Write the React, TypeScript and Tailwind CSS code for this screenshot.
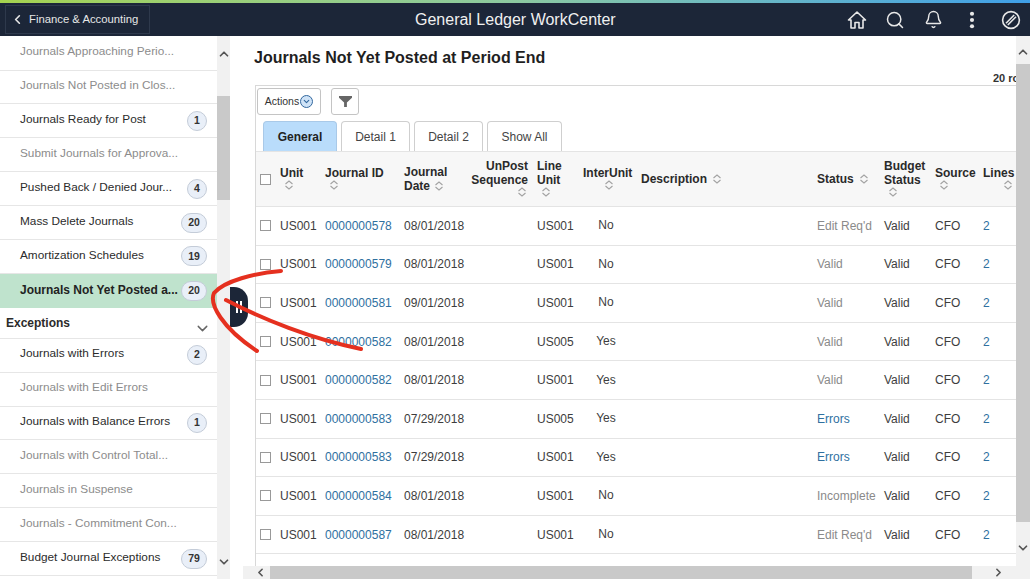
import { Bell, ChevronDown, ChevronLeft, ChevronRight, ChevronUp, Search } from "lucide-react";

type NavItem = { label: string; count?: number; muted?: boolean; active?: boolean };

const topItems: NavItem[] = [
  { label: "Journals Approaching Perio...", muted: true },
  { label: "Journals Not Posted in Clos...", muted: true },
  { label: "Journals Ready for Post", count: 1 },
  { label: "Submit Journals for Approva...", muted: true },
  { label: "Pushed Back / Denied Jour...", count: 4 },
  { label: "Mass Delete Journals", count: 20 },
  { label: "Amortization Schedules", count: 19 },
  { label: "Journals Not Yet Posted a...", count: 20, active: true },
];

const exceptionItems: NavItem[] = [
  { label: "Journals with Errors", count: 2 },
  { label: "Journals with Edit Errors", muted: true },
  { label: "Journals with Balance Errors", count: 1 },
  { label: "Journals with Control Total...", muted: true },
  { label: "Journals in Suspense", muted: true },
  { label: "Journals - Commitment Con...", muted: true },
  { label: "Budget Journal Exceptions", count: 79 },
];

const rows = [
  { unit: "US001", id: "0000000578", date: "08/01/2018", line: "US001", inter: "No", status: "Edit Req'd" },
  { unit: "US001", id: "0000000579", date: "08/01/2018", line: "US001", inter: "No", status: "Valid" },
  { unit: "US001", id: "0000000581", date: "09/01/2018", line: "US001", inter: "No", status: "Valid" },
  { unit: "US001", id: "0000000582", date: "08/01/2018", line: "US005", inter: "Yes", status: "Valid" },
  { unit: "US001", id: "0000000582", date: "08/01/2018", line: "US001", inter: "Yes", status: "Valid" },
  { unit: "US001", id: "0000000583", date: "07/29/2018", line: "US005", inter: "Yes", status: "Errors" },
  { unit: "US001", id: "0000000583", date: "07/29/2018", line: "US001", inter: "Yes", status: "Errors" },
  { unit: "US001", id: "0000000584", date: "08/01/2018", line: "US001", inter: "No", status: "Incomplete" },
  { unit: "US001", id: "0000000587", date: "08/01/2018", line: "US001", inter: "No", status: "Edit Req'd" },
];

const gridCols = "grid grid-cols-[24px_45px_79px_66px_67px_46px_58px_176px_67px_51px_48px_33px]";

function Sort({ className = "" }: { className?: string }) {
  return (
    <svg viewBox="0 0 10 10" className={`h-[10px] w-[10px] shrink-0 ${className}`} fill="none" stroke="#a3a3a3" strokeWidth="1.1">
      <path d="M1.5 4 5 1l3.5 3M1.5 6 5 9l3.5-3" />
    </svg>
  );
}

function Checkbox() {
  return <div className="h-[11px] w-[11px] border border-[#999] bg-white" />;
}

function NavRow({ item }: { item: NavItem }) {
  return (
    <div
      className={`flex h-[33.9px] items-center justify-between pl-5 pr-[10px] ${
        item.active ? "bg-[#bfe3cd] text-[12px] font-bold text-[#222]" : "border-b border-[#e6e6e6] text-[11.8px]"
      } ${item.muted ? "text-[#8c8c8c]" : "text-[#2b2b2b]"}`}
    >
      <span className="mb-[2px] whitespace-nowrap">{item.label}</span>
      {item.count !== undefined && (
        <span
          className={`flex h-[20px] items-center justify-center rounded-full border border-[#c4ccd8] bg-[#e9eff8] text-[10.5px] font-bold text-[#333] ${
            item.count > 9 ? "w-[26px]" : "w-[20px]"
          }`}
        >
          {item.count}
        </span>
      )}
    </div>
  );
}

function Annotation() {
  return (
    <svg className="pointer-events-none absolute left-0 top-0 h-[579px] w-[1030px]" viewBox="0 0 1030 579" fill="none" stroke="#e5301f" strokeWidth="4" strokeLinecap="round">
      <path d="M281 271C255 273 224 281 214 293C209 304 222 328 257 351" />
      <path d="M226 300C262 319 312 339 361 349" />
    </svg>
  );
}

export default function App() {
  return (
    <div className="flex h-[579px] w-[1030px] flex-col overflow-hidden bg-white font-['Liberation_Sans',Arial,sans-serif] text-[12px] text-[#3d3d3d]">
      <div className="h-[3px] shrink-0 bg-gradient-to-r from-[#a5d34f] via-[#8cc9a0] to-[#3f9fe8]" />
      <header className="relative flex h-[33px] shrink-0 items-center justify-between bg-[#1c2638] text-white">
        <div className="ml-[5px] flex h-[29px] w-[145px] items-center gap-[4px] border border-[#2e394c] pl-[4px] text-[11.3px] text-[#e6e6e6]">
          <ChevronLeft size={15} strokeWidth={2.6} />
          Finance &amp; Accounting
        </div>
        <div className="absolute left-[415px] text-[16px] text-[#f0f0f0]">General Ledger WorkCenter</div>
        <div className="flex items-center text-[#e8e8e8]">
          <div className="flex w-[38.5px] justify-center">
            <svg viewBox="0 0 20 20" className="h-[20px] w-[20px]" fill="none" stroke="currentColor" strokeWidth="1.6" strokeLinejoin="round">
              <path d="M1.5 10 10 2l8.5 8H16v8h-4v-5.5H8V18H4v-8z" />
            </svg>
          </div>
          <div className="flex w-[38.5px] justify-center">
            <Search size={20} strokeWidth={1.8} />
          </div>
          <div className="flex w-[38.5px] justify-center">
            <Bell size={19} strokeWidth={1.8} />
          </div>
          <div className="flex w-[38.5px] justify-center">
            <svg viewBox="0 0 6 20" className="h-[18px] w-[6px]" fill="currentColor">
              <circle cx="3" cy="3" r="2.3" />
              <circle cx="3" cy="10" r="2.3" />
              <circle cx="3" cy="17" r="2.3" />
            </svg>
          </div>
          <div className="flex w-[38.5px] justify-center">
            <svg viewBox="0 0 20 20" className="h-[20px] w-[20px]" fill="none" stroke="currentColor" strokeWidth="1.6">
              <circle cx="10" cy="10" r="8.4" />
              <path d="M5 13.2 13.2 5M6.8 15 15 6.8" />
            </svg>
          </div>
        </div>
      </header>

      <div className="relative flex min-h-0 flex-1">
        <aside className="flex w-[230px] shrink-0 overflow-hidden">
          <div className="w-[217px] shrink-0 pt-[0.7px]">
            {topItems.map((item) => (
              <NavRow key={item.label} item={item} />
            ))}
            <div className="flex h-[31px] items-center justify-between border-b border-[#e6e6e6] px-[6px] font-bold text-[#2b2b2b]">
              <span>Exceptions</span>
              <ChevronDown size={17} className="mt-[12px] text-[#666]" />
            </div>
            {exceptionItems.map((item) => (
              <NavRow key={item.label} item={item} />
            ))}
          </div>
          <div className="flex w-[13px] shrink-0 flex-col items-center bg-[#f1f1f1]">
            <ChevronUp size={14} strokeWidth={3} className="mt-[11px] text-[#555]" />
            <div className="mt-[35px] h-[104px] w-full bg-[#c9c9c9]" />
            <ChevronDown size={14} strokeWidth={3} className="mt-auto mb-[10px] text-[#555]" />
          </div>
        </aside>

        <main className="flex min-w-0 flex-1 flex-col">
          <div className="flex min-h-0 flex-1">
            <div className="flex min-w-0 flex-1 flex-col overflow-hidden pl-[25px]">
              <h1 className="-ml-[1px] mt-[12px] h-[20px] whitespace-nowrap text-[16px] font-bold leading-[20px] text-[#1f1f1f]">
                Journals Not Yet Posted at Period End
              </h1>
              <div className="mt-[4px] h-[13px] whitespace-nowrap pl-[738px] text-[11px] font-bold leading-[13px] text-[#333]">20 rows</div>
              <div className="flex-1 border-l border-t border-[#d8d8d8]">
                <div className="flex items-center gap-[10px] pl-[1px] pt-[2px]">
                  <div className="flex h-[27px] w-[64px] items-center justify-center gap-[1px] rounded-[3px] border border-[#c4c4c4] text-[10.5px] text-[#333]">
                    Actions
                    <span className="flex h-[13px] w-[13px] items-center justify-center rounded-full border border-[#33689e] bg-[#cfe3f7]">
                      <ChevronDown size={9} strokeWidth={3} className="text-[#33689e]" />
                    </span>
                  </div>
                  <div className="flex h-[27px] w-[28px] items-center justify-center rounded-[3px] border border-[#c4c4c4]">
                    <svg viewBox="0 0 14 14" className="h-[13px] w-[13px]" fill="#666">
                      <path d="M0 1h14v2L8.5 8v5h-3V8L0 3z" />
                    </svg>
                  </div>
                </div>
                <div className="mt-[6px] flex items-end gap-[4px] pl-[7px]">
                  <div className="flex h-[30px] w-[74px] items-center justify-center rounded-t-[4px] border border-b-0 border-[#a9c9e8] bg-[#b9dcfb] font-bold text-[#222]">General</div>
                  {["Detail 1", "Detail 2", "Show All"].map((tab, i) => (
                    <div
                      key={tab}
                      className={`flex h-[30px] items-center justify-center rounded-t-[4px] border border-b-0 border-[#cfcfcf] text-[#444] ${
                        i === 2 ? "w-[75px]" : "w-[69px]"
                      }`}
                    >
                      {tab}
                    </div>
                  ))}
                </div>

                <div className={`${gridCols} h-[56px] border-y border-[#e4e4e4] bg-[#f7f7f7] font-bold leading-[14px] text-[#2a2a2a]`}>
                  <div className="flex items-center pl-[4px]"><Checkbox /></div>
                  <div className="flex flex-col justify-center pb-[3px]">Unit<Sort className="ml-[4px]" /></div>
                  <div className="flex flex-col justify-center pb-[3px]">Journal ID<Sort className="ml-[4px]" /></div>
                  <div className="flex flex-col justify-center">
                    <span>Journal</span>
                    <span className="flex items-center gap-[4px]">Date <Sort /></span>
                  </div>
                  <div className="flex flex-col items-end justify-center pb-[2px] pr-[9px] text-right">
                    <span>UnPost</span>
                    <span>Sequence</span>
                    <Sort className="mr-[1px]" />
                  </div>
                  <div className="flex flex-col justify-center pb-[2px]">
                    <span>Line</span>
                    <span>Unit</span>
                    <Sort className="ml-[4px]" />
                  </div>
                  <div className="flex flex-col justify-center pb-[3px]">InterUnit<Sort className="ml-[21px]" /></div>
                  <div className="flex items-center gap-[5px]">Description<Sort /></div>
                  <div className="flex items-center gap-[5px]">Status<Sort /></div>
                  <div className="flex flex-col justify-center pb-[2px]">
                    <span>Budget</span>
                    <span>Status</span>
                    <Sort className="ml-[4px]" />
                  </div>
                  <div className="flex flex-col justify-center pb-[3px]">Source<Sort className="ml-[4px]" /></div>
                  <div className="flex flex-col justify-center whitespace-nowrap pb-[3px]">Lines<Sort className="ml-[20px]" /></div>
                </div>

                {rows.map((row, i) => (
                  <div key={i} className={`${gridCols} h-[38.6px] items-center border-b border-[#e4e4e4]`}>
                    <div className="pl-[4px]"><Checkbox /></div>
                    <div>{row.unit}</div>
                    <div className="text-[#2f709f]">{row.id}</div>
                    <div>{row.date}</div>
                    <div />
                    <div>{row.line}</div>
                    <div className="pb-[1px] pr-[12px] text-center">{row.inter}</div>
                    <div />
                    <div className={`whitespace-nowrap ${row.status === "Errors" ? "text-[#2f709f]" : "text-[#8a8a8a]"}`}>{row.status}</div>
                    <div>Valid</div>
                    <div>CFO</div>
                    <div className="text-[#2f709f]">2</div>
                  </div>
                ))}
              </div>
            </div>

            <div className="flex w-[14px] shrink-0 flex-col items-center bg-[#f1f1f1]">
              <ChevronUp size={14} strokeWidth={3} className="mt-[9px] text-[#555]" />
              <div className="mt-[5px] h-[458px] w-full bg-[#c9c9c9]" />
              <ChevronDown size={14} strokeWidth={3} className="mt-[19px] text-[#555]" />
            </div>
          </div>

          <div className="ml-[13px] flex h-[13px] shrink-0 items-center bg-[#f1f1f1] pl-[11px]">
            <ChevronLeft size={13} strokeWidth={3} className="text-[#555]" />
            <div className="ml-[3px] h-full w-[702px] bg-[#c9c9c9]" />
            <ChevronRight size={13} strokeWidth={3} className="ml-[20px] text-[#555]" />
          </div>
        </main>

        <div className="absolute left-[230px] top-[251px] flex h-[40px] w-[18px] items-center justify-center gap-[2px] rounded-r-[14px] bg-[#1c2638]">
          <span className="h-[12px] w-[2px] bg-white" />
          <span className="h-[12px] w-[2px] bg-white" />
        </div>
      </div>
      <Annotation />
    </div>
  );
}
